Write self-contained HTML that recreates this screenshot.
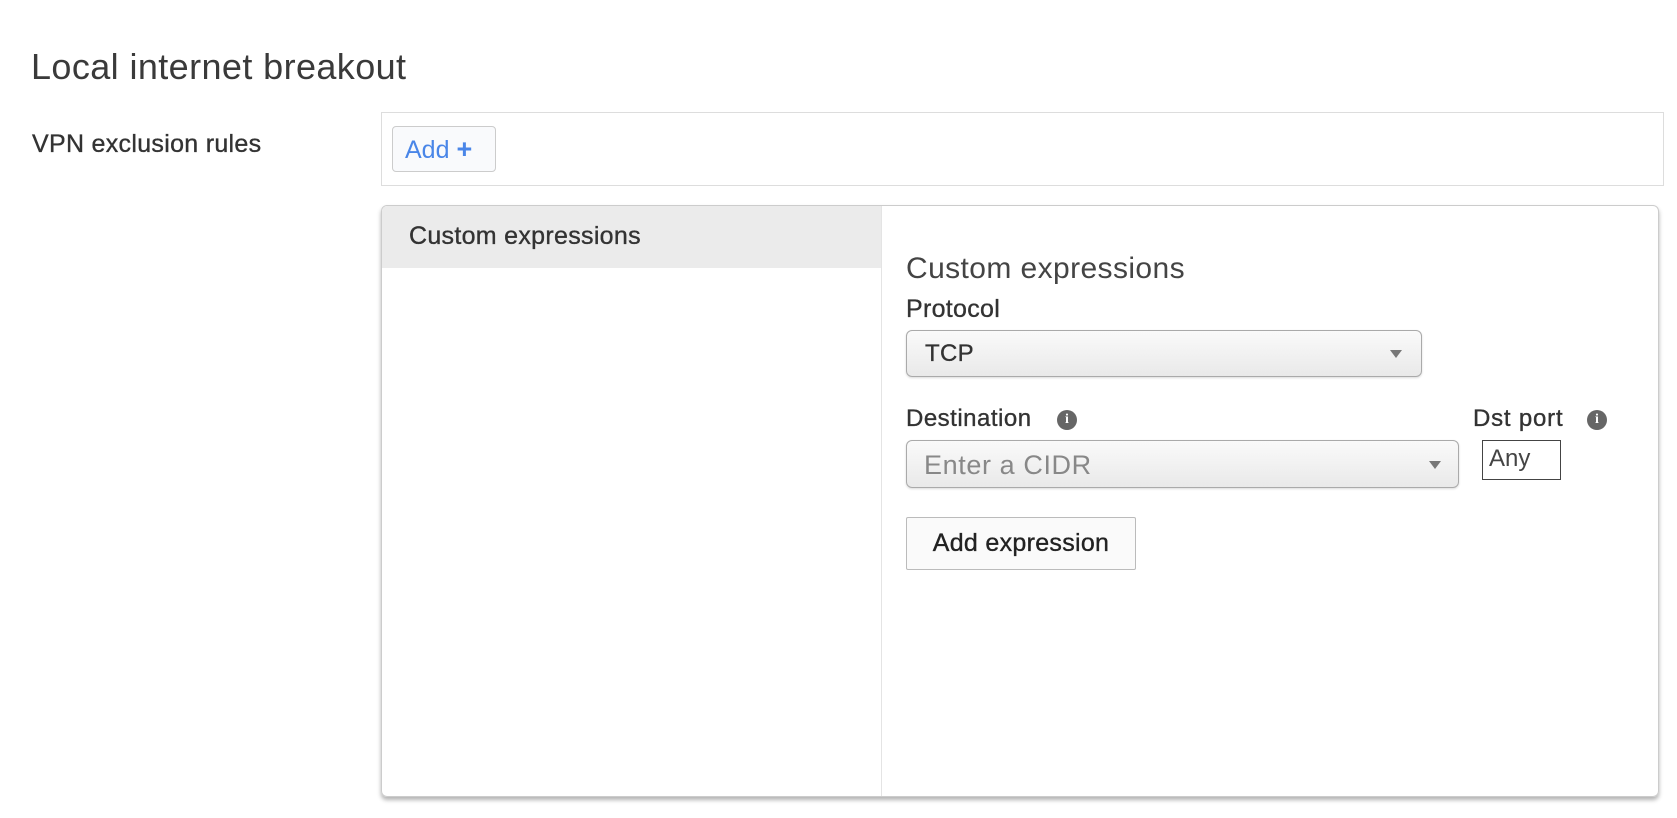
<!DOCTYPE html>
<html><head><meta charset="utf-8"><style>
*{box-sizing:border-box;margin:0;padding:0}
body{width:1677px;height:818px;background:#fff;font-family:"Liberation Sans",sans-serif;color:#333;position:relative;overflow:hidden}
.a{position:absolute;white-space:nowrap}
.m{-webkit-text-stroke:0.35px currentColor;letter-spacing:0.3px}
.sel{position:absolute;border:1px solid #aaa;border-radius:6px;background:linear-gradient(#fafafa,#e9e9e9);box-shadow:0 1px 2px rgba(0,0,0,.15)}
.tri{position:absolute;width:0;height:0;border-left:6px solid transparent;border-right:6px solid transparent;border-top:8px solid #777}
.info{position:absolute;width:20px;height:20px;border-radius:50%;background:#666;color:#fff;font:bold 14px "Liberation Serif",serif;text-align:center;line-height:20px}
</style></head><body>
<div class="a" style="left:31px;top:46px;font-size:36px;color:#3a3a3a;letter-spacing:0.4px">Local internet breakout</div>
<div class="a m" style="left:32px;top:130px;font-size:25px;color:#333">VPN exclusion rules</div>
<div class="a" style="left:381px;top:112px;width:1283px;height:74px;border:1px solid #ddd"></div>
<div class="a" style="left:392px;top:126px;width:104px;height:46px;border:1px solid #ccc;border-radius:4px;background:#f9fafc;color:#4a86e8;font-size:25px;line-height:44px;padding-left:12px">Add <span style="font-weight:bold;font-size:27px">+</span></div>
<div class="a" style="left:381px;top:205px;width:1278px;height:592px;border:1px solid #ccc;border-radius:6px;box-shadow:0 3px 4px rgba(0,0,0,.3);overflow:hidden">
 <div class="a" style="left:0;top:0;width:499px;height:62px;background:#ebebeb"></div>
 <div class="a" style="left:499px;top:0;width:1px;height:592px;background:#e4e4e4"></div>
 <div class="a m" style="left:27px;top:16px;font-size:25px;color:#333">Custom expressions</div>
</div>
<div class="a" style="left:906px;top:252px;font-size:30px;color:#444;letter-spacing:0.4px">Custom expressions</div>
<div class="a m" style="left:906px;top:295px;font-size:25px;color:#333">Protocol</div>
<div class="sel" style="left:906px;top:330px;width:516px;height:47px"><div class="a m" style="left:18px;top:9px;font-size:24px;color:#333">TCP</div><div class="tri" style="left:483px;top:19px"></div></div>
<div class="a m" style="left:906px;top:405px;font-size:24px;color:#333;letter-spacing:0.5px">Destination</div>
<div class="info" style="left:1057px;top:410px">i</div>
<div class="sel" style="left:906px;top:440px;width:553px;height:48px"><div class="a" style="left:17px;top:9px;font-size:27px;color:#888;letter-spacing:0.6px">Enter a CIDR</div><div class="tri" style="left:522px;top:20px"></div></div>
<div class="a m" style="left:1473px;top:405px;font-size:24px;color:#333;letter-spacing:0.8px">Dst port</div>
<div class="info" style="left:1587px;top:410px">i</div>
<div class="a" style="left:1482px;top:440px;width:79px;height:40px;border:1px solid #444;font-size:24px;padding:4px 0 0 6px;color:#444">Any</div>
<div class="a m" style="left:906px;top:517px;width:230px;height:53px;border:1px solid #bbb;border-radius:2px;background:#fafafa;font-size:25px;line-height:51px;text-align:center;color:#222">Add expression</div>
</body></html>
